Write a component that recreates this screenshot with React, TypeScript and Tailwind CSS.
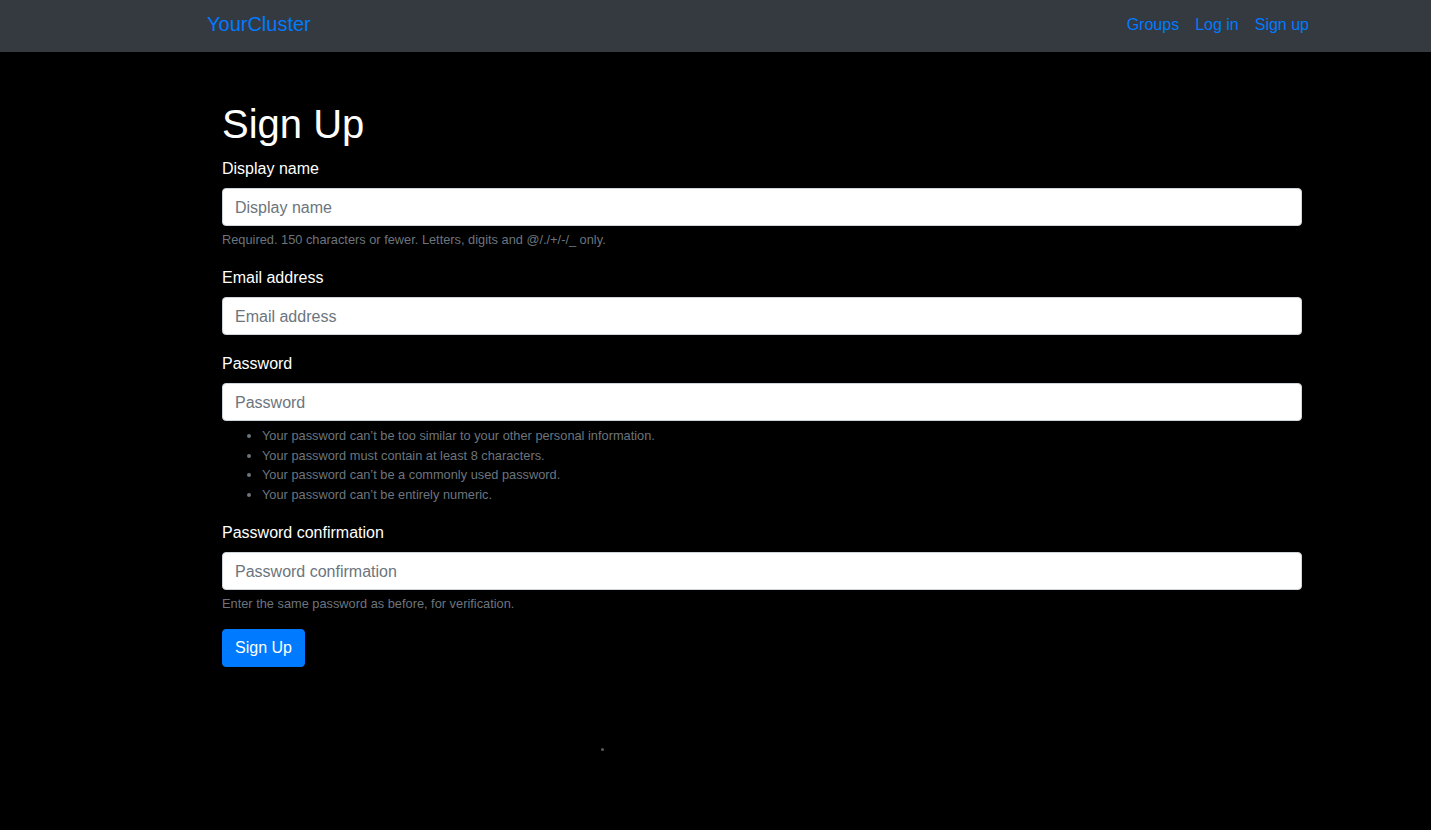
import React from "react";

const font = { fontFamily: '"Liberation Sans", Arial, Helvetica, sans-serif' };

function Field({
  label,
  type,
  children,
}: {
  label: string;
  type: string;
  children?: React.ReactNode;
}) {
  return (
    <div className="mb-4">
      <label className="mb-[7px] block pt-[1px] text-[16px] leading-6 text-white">{label}</label>
      <input
        type={type}
        placeholder={label}
        className="block h-[38px] w-full rounded-[4px] border border-[#ced4da] bg-white px-3 pb-[5px] pt-[7px] text-[16px] leading-6 text-[#495057] outline-none placeholder:text-[#6c757d]"
      />
      {children}
    </div>
  );
}

export default function App() {
  return (
    <div className="min-h-[830px] bg-black" style={font}>
      <nav className="h-[52px] bg-[#343a40]">
        <div className="ml-[207px] flex h-[52px] w-[1110px] items-center justify-between">
          <a href="#" className="-mt-[4px] text-[20px] leading-[30px] text-[#007bff]">
            YourCluster
          </a>
          <div className="-mt-[2px] flex">
            <a href="#" className="px-2 text-[16px] leading-6 text-[#007bff]">Groups</a>
            <a href="#" className="px-2 text-[16px] leading-6 text-[#007bff]">Log in</a>
            <a href="#" className="px-2 text-[16px] leading-6 text-[#007bff]">Sign up</a>
          </div>
        </div>
      </nav>
      <main className="ml-[222px] w-[1080px] pt-12">
        <h1 className="mb-2 text-[40px] font-normal leading-[48px] text-white">Sign Up</h1>
        <form onSubmit={(e) => e.preventDefault()}>
          <Field label="Display name" type="text">
            <small className="mt-1 block text-[12.8px] leading-[19.2px] text-[#6c757d]">
              Required. 150 characters or fewer. Letters, digits and @/./+/-/_ only.
            </small>
          </Field>
          <Field label="Email address" type="email" />
          <Field label="Password" type="password">
            <ul className="-mb-[1px] mt-[5px] list-disc pl-10 text-[12.8px] leading-[19.6px] text-[#6c757d]">
              <li>Your password can’t be too similar to your other personal information.</li>
              <li>Your password must contain at least 8 characters.</li>
              <li>Your password can’t be a commonly used password.</li>
              <li>Your password can’t be entirely numeric.</li>
            </ul>
          </Field>
          <Field label="Password confirmation" type="password">
            <small className="mt-1 block text-[12.8px] leading-[19.2px] text-[#6c757d]">
              Enter the same password as before, for verification.
            </small>
          </Field>
          <button
            type="submit"
            className="h-[38px] rounded-[4px] border border-[#007bff] bg-[#007bff] px-3 pt-[1px] text-[16px] leading-6 text-white"
          >
            Sign Up
          </button>
        </form>
        <div className="ml-[379px] mt-[81px] h-[3px] w-[3px] rounded-full bg-[#5a5a5a]" />
      </main>
    </div>
  );
}
